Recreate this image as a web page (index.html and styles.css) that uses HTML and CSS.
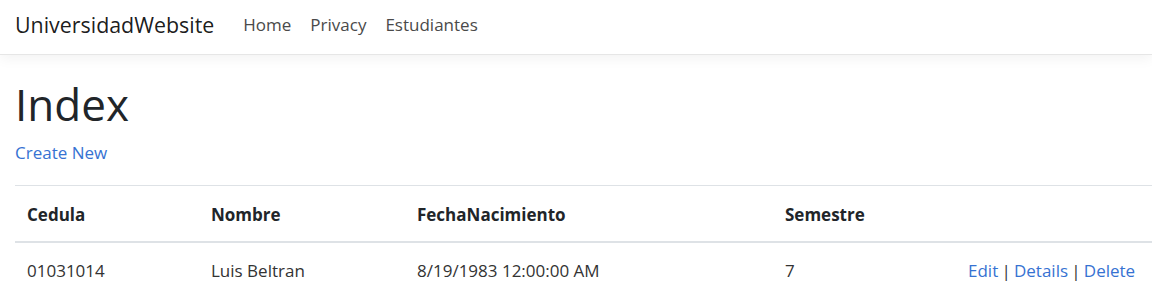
FILE: index.html
```html
<!DOCTYPE html>
<html lang="es">
<head>
<meta charset="utf-8">
<title>Index - UniversidadWebsite</title>
<link rel="stylesheet" href="styles.css">
</head>
<body>
<header class="navbar">
  <a class="brand" href="#">UniversidadWebsite</a>
  <nav class="nav">
    <a class="nav-link" href="#">Home</a>
    <a class="nav-link" href="#">Privacy</a>
    <a class="nav-link" href="#">Estudiantes</a>
  </nav>
</header>
<main class="main">
  <h1 class="title">Index</h1>
  <p class="create"><a href="#">Create New</a></p>
  <table class="table">
    <colgroup>
      <col class="c1"><col class="c2"><col class="c3"><col class="c4"><col class="c5">
    </colgroup>
    <thead>
      <tr>
        <th>Cedula</th>
        <th>Nombre</th>
        <th>FechaNacimiento</th>
        <th>Semestre</th>
        <th></th>
      </tr>
    </thead>
    <tbody>
      <tr>
        <td>01031014</td>
        <td>Luis Beltran</td>
        <td>8/19/1983 12:00:00 AM</td>
        <td>7</td>
        <td class="actions"><a href="#">Edit</a> | <a href="#">Details</a> | <a href="#">Delete</a></td>
      </tr>
    </tbody>
  </table>
</main>
</body>
</html>
```
FILE: styles.css
```css
html, body {
  margin: 0;
  padding: 0;
  background: #fff;
}
body {
  font-family: "Open Sans", "Noto Sans", "DejaVu Sans", sans-serif;
  font-size: 17px;
  color: #212529;
  overflow: hidden;
}
a {
  color: #3672d2;
  text-decoration: none;
}
.navbar {
  box-sizing: border-box;
  height: 55px;
  display: flex;
  align-items: center;
  padding: 0 0 5px 15px;
  border-bottom: 1px solid #e6e6e6;
  box-shadow: 0 4px 12px rgba(0, 0, 0, 0.05);
  position: relative;
}
.brand {
  font-size: 21.4px;
  line-height: 28px;
  color: rgba(0, 0, 0, 0.9);
  margin-right: 29px;
}
.nav {
  display: flex;
  gap: 19px;
}
.nav-link {
  font-size: 17px;
  line-height: 28px;
  color: #4a4a4a;
}
.main {
  padding: 23px 0 0 15px;
}
.title {
  margin: 0 0 11px;
  font-size: 44px;
  line-height: 52px;
  font-weight: 500;
  color: #212529;
}
.create {
  margin: 0 0 20px;
  line-height: 24px;
}
.table {
  width: 1137px;
  table-layout: fixed;
  border-collapse: separate;
  border-spacing: 0;
}
.c1 { width: 184px; }
.c2 { width: 206px; }
.c3 { width: 368px; }
.c4 { width: 183px; }
.c5 { width: 196px; }
.table th {
  text-align: left;
  font-weight: 700;
  line-height: 29px;
  padding: 14px 12px 12px;
  border-top: 1px solid #dee2e6;
  border-bottom: 2px solid #dee2e6;
  white-space: nowrap;
}
.table td {
  line-height: 29px;
  padding: 13px 12px 12px;
  white-space: nowrap;
  color: #333;
}
.table td.actions {
  word-spacing: -1.2px;
}
```
